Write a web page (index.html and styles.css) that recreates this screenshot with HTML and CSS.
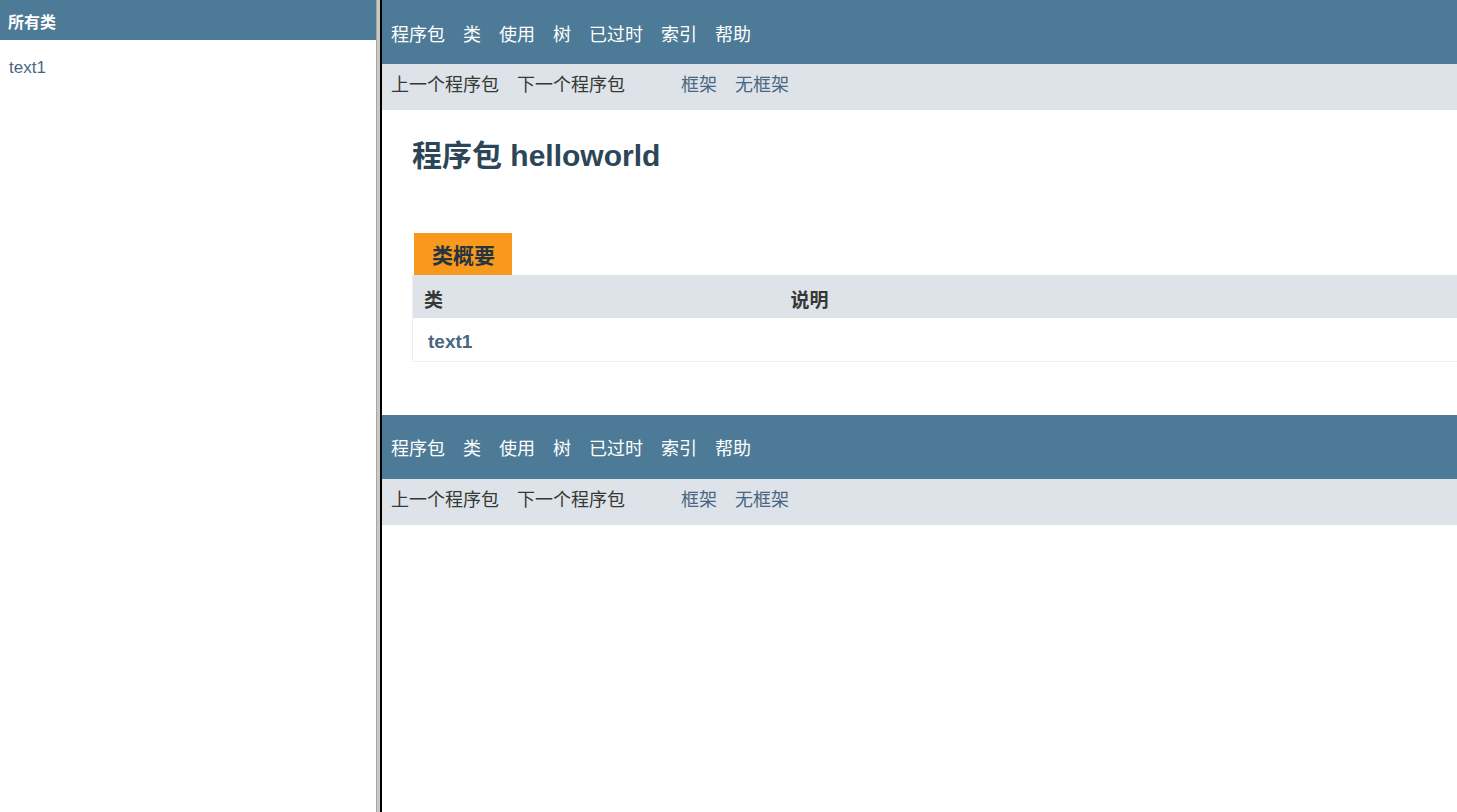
FILE: index.html
```html
<!DOCTYPE html>
<html>
<head>
  <meta charset="UTF-8">
  <title>helloworld</title>
  <link rel="stylesheet" href="styles.css">
</head>
<body>
  <div class="frames">
    <div class="left-frame">
      <div class="bar">所有类</div>
      <ul class="class-list">
        <li><a href="#">text1</a></li>
      </ul>
    </div>
    <div class="divider"></div>
    <div class="right-frame">
      <div class="top-nav">
        <ul class="nav-list">
          <li>程序包</li>
          <li>类</li>
          <li>使用</li>
          <li>树</li>
          <li>已过时</li>
          <li>索引</li>
          <li>帮助</li>
        </ul>
      </div>
      <div class="sub-nav">
        <ul class="nav-list">
          <li>上一个程序包</li>
          <li>下一个程序包</li>
        </ul>
        <ul class="nav-list frames-list">
          <li><a href="#">框架</a></li>
          <li><a href="#">无框架</a></li>
        </ul>
      </div>
      <div class="header">
        <h1 class="title">程序包 helloworld</h1>
      </div>
      <div class="content">
        <div class="caption"><span>类概要</span></div>
        <table class="summary">
          <tr class="head">
            <th class="col-first">类</th>
            <th class="col-last">说明</th>
          </tr>
          <tr>
            <td class="col-first"><a href="#">text1</a></td>
            <td class="col-last"></td>
          </tr>
        </table>
      </div>
      <div class="top-nav bottom">
        <ul class="nav-list">
          <li>程序包</li>
          <li>类</li>
          <li>使用</li>
          <li>树</li>
          <li>已过时</li>
          <li>索引</li>
          <li>帮助</li>
        </ul>
      </div>
      <div class="sub-nav">
        <ul class="nav-list">
          <li>上一个程序包</li>
          <li>下一个程序包</li>
        </ul>
        <ul class="nav-list frames-list">
          <li><a href="#">框架</a></li>
          <li><a href="#">无框架</a></li>
        </ul>
      </div>
    </div>
  </div>
</body>
</html>
```

FILE: styles.css
```css
html, body { margin: 0; padding: 0; height: 100%; overflow: hidden; }
body { font-family: "Liberation Sans", Arial, "Noto Sans CJK SC", sans-serif; color: #353833; background: #fff; }
a { color: #4a6782; text-decoration: none; }
ul { margin: 0; padding: 0; list-style: none; }

.frames { display: flex; height: 812px; }
.left-frame { width: 376px; flex: none; background: #fff; }
.divider { width: 3px; flex: none; background: #c9c9c9; border-left: 1px solid #a6a6a6; }
.right-frame { flex: 1; min-width: 0; border-left: 2px solid #000; overflow: hidden; }

.bar { background: #4d7a97; color: #fff; font-weight: bold; font-size: 16px; height: 40px; line-height: 46px; padding-left: 8px; box-sizing: border-box; }
.class-list { padding: 17px 0 0 9px; font-size: 17px; line-height: 22px; }

.top-nav { background: #4d7a97; color: #fff; height: 64px; display: flex; align-items: center; padding: 5px 0 0 0; box-sizing: border-box; }
.top-nav.bottom { margin-top: 53px; }
.sub-nav { background: #dee3e9; height: 46px; display: flex; align-items: center; padding-bottom: 4px; box-sizing: border-box; }
.nav-list { display: flex; font-size: 18px; line-height: 24px; padding-left: 0; }
.nav-list li { padding: 0 9px; }
.frames-list { margin-left: 38px; }

.header { padding: 26px 30px 0 30px; height: 123px; box-sizing: border-box; }
.title { margin: 0; font-size: 30px; line-height: 40px; color: #2c4557; font-weight: bold; }

.content { padding-left: 30px; }
.caption { padding-left: 2px; display: flex; }
.caption span { background: #f8981d; color: #253441; font-weight: bold; font-size: 21px; height: 42px; line-height: 46px; padding: 0 17px 0 18px; }
.summary { border-collapse: collapse; width: 1100px; border: 1px solid #eee; border-top: none; border-right: none; }
.summary th { background: #dee3e9; text-align: left; font-size: 19px; font-weight: bold; height: 43px; padding: 4px 11px 0 11px; box-sizing: border-box; color: #353833; }
.summary th.col-first { width: 367px; }
.summary td { height: 43px; padding: 5px 15px 0 15px; font-size: 19px; font-weight: bold; border-bottom: 1px solid #eee; box-sizing: border-box; }
```
